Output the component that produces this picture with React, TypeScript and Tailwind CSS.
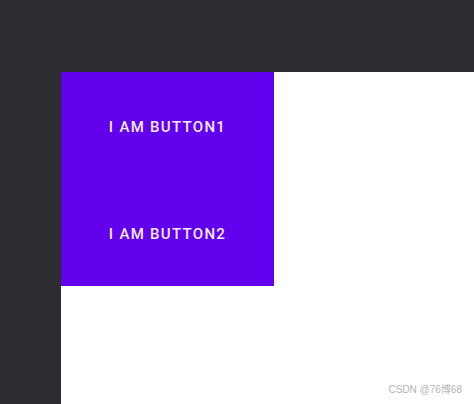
export default function App() {
  return (
    <div className="relative flex h-[404px] w-[474px] flex-col overflow-hidden bg-[#2b2d30] pl-[61px] pt-[72px]">
      <div className="flex flex-1 flex-col items-start bg-white">
        <div className="flex w-[213px] flex-col bg-[#6200ee]">
          <div className="flex h-[107px] items-center justify-center pt-[3px] text-[15px] font-medium uppercase tracking-[1.3px] text-[#f3eaff] [font-family:Roboto,sans-serif]">
            I am button1
          </div>
          <div className="flex h-[107px] items-center justify-center pt-[3px] text-[15px] font-medium uppercase tracking-[1.3px] text-[#f3eaff] [font-family:Roboto,sans-serif]">
            I am button2
          </div>
        </div>
      </div>
      <div className="absolute bottom-[7px] right-[12px] text-[10px] text-[#b4b4b4] [font-family:'Liberation_Sans','Noto_Sans_CJK_SC',sans-serif]">
        CSDN @76博68
      </div>
    </div>
  );
}
